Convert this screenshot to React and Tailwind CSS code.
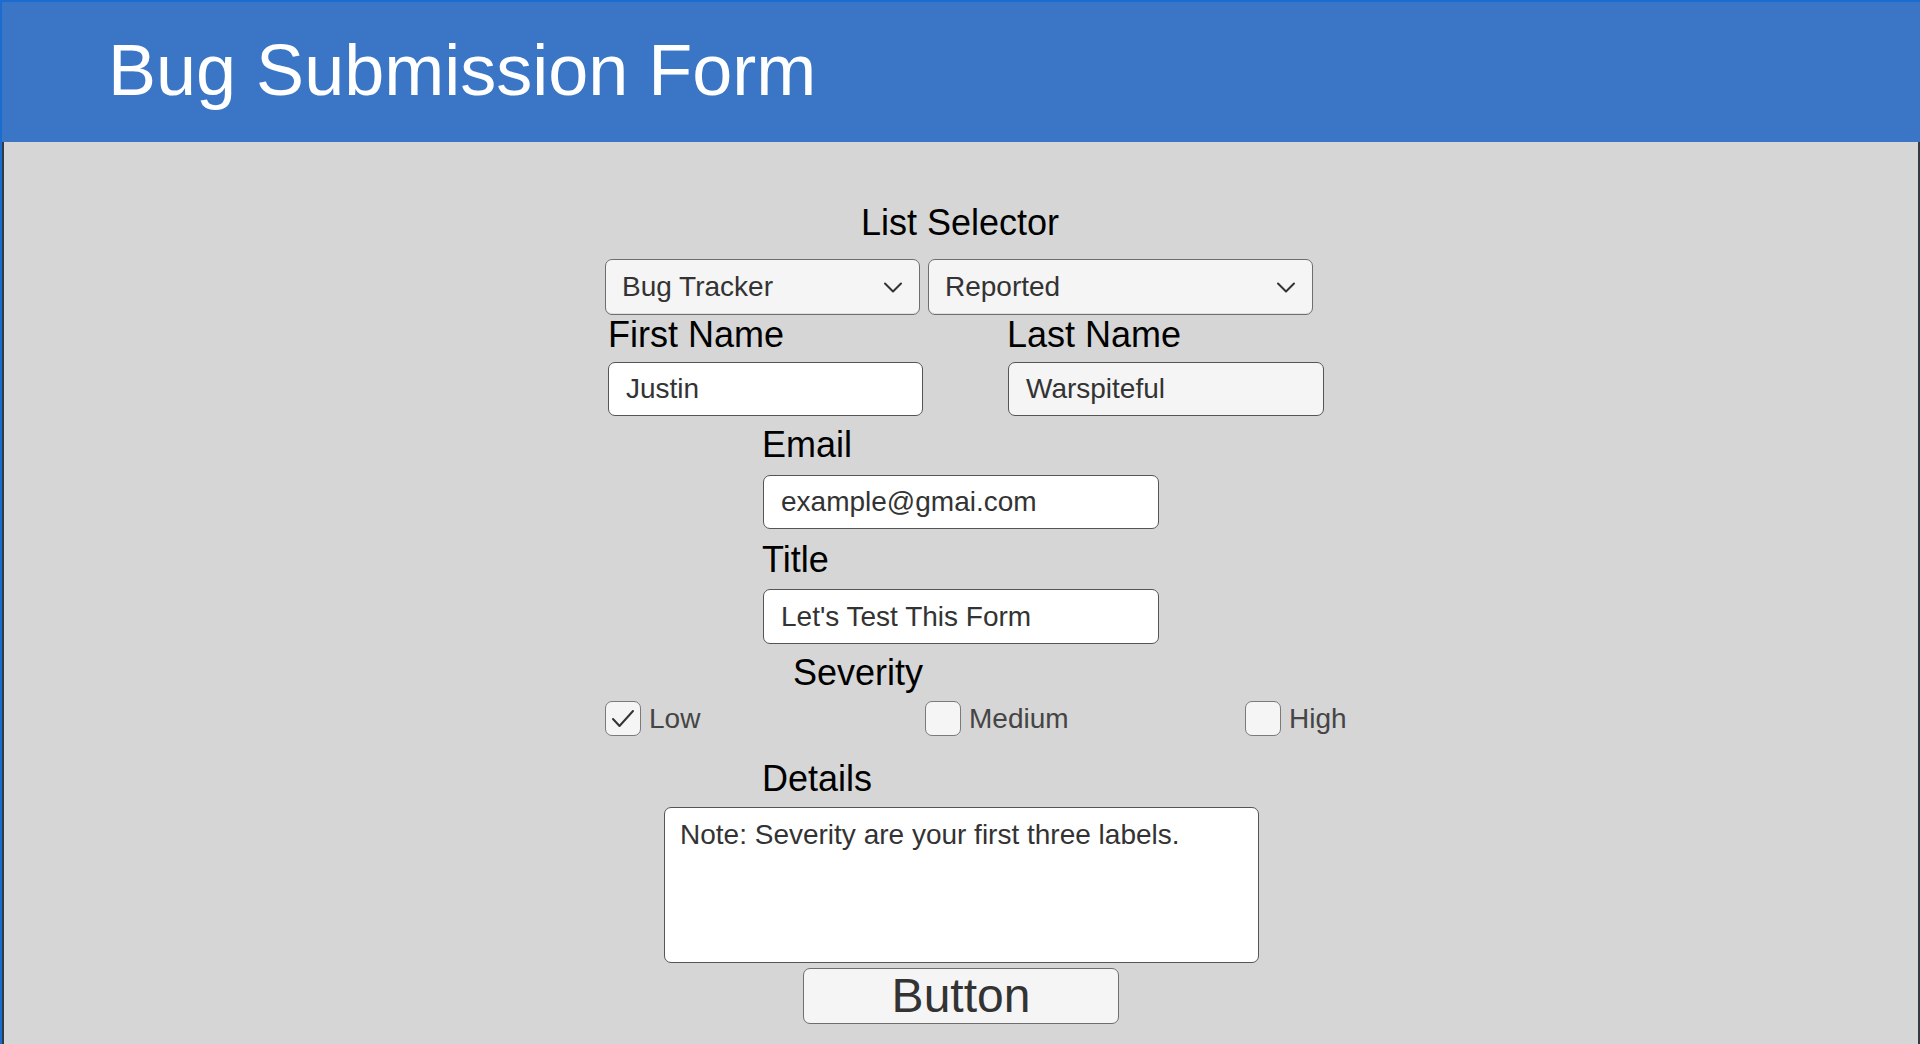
import React from 'react';

const Chevron = () => (
  <svg width="18" height="11" viewBox="0 0 18 11" fill="none" className="shrink-0">
    <path d="M1 1.5L9 9.5L17 1.5" stroke="#333333" strokeWidth="2" strokeLinecap="round" strokeLinejoin="round" />
  </svg>
);

const Dropdown = ({ value, width }) => (
  <div
    className={`${width} h-[56px] shrink-0 flex items-center justify-between pl-[16px] pr-[17px] bg-[#f5f5f5] border border-[#6e6e6e] rounded-[7px] shadow-[inset_0_-1px_0_rgba(0,0,0,0.08)] text-[28px] leading-none text-[#333333]`}
  >
    <span>{value}</span>
    <Chevron />
  </div>
);

const TextBox = ({ value, className = '' }) => (
  <div
    className={`h-[54px] flex items-center pl-[17px] border border-[#555555] rounded-[7px] text-[28px] leading-none text-[#333333] ${className}`}
  >
    {value}
  </div>
);

const Check = ({ label, checked }) => (
  <div className="w-[320px] shrink-0 flex items-center gap-[8px]">
    <div className="w-[36px] h-[35px] shrink-0 bg-[#f5f5f5] border border-[#7a7a7a] rounded-[7px] flex items-center justify-center">
      {checked && (
        <svg width="24" height="20" viewBox="0 0 24 20" fill="none">
          <path d="M2 10L8.5 17L22 2" stroke="#333333" strokeWidth="2" strokeLinecap="round" strokeLinejoin="round" />
        </svg>
      )}
    </div>
    <span className="text-[28px] leading-none text-[#454545]">{label}</span>
  </div>
);

const Label = ({ children, className = '' }) => (
  <div className={`text-[36px] leading-none text-black ${className}`}>{children}</div>
);

export default function App() {
  return (
    <div className="h-screen overflow-hidden bg-[#1a6cd0] pt-[2px] pl-[2px] font-['Liberation_Sans',Arial,sans-serif]">
      {/* Header */}
      <div className="h-[140px] bg-[#3b76c6] pl-[106px] pt-[32px]">
        <h1 className="text-[72px] leading-none text-white">Bug Submission Form</h1>
      </div>

      {/* Body */}
      <div className="h-[902px] bg-[#d6d6d6] border-l-2 border-r-2 border-[#323a44]">
        <div className="w-[720px] ml-[596px] pt-[63px]">
          <Label className="text-center">List Selector</Label>

          <div className="flex gap-[8px] ml-[5px] mt-[18px]">
            <Dropdown value="Bug Tracker" width="w-[315px]" />
            <Dropdown value="Reported" width="w-[385px]" />
          </div>

          <div className="flex mt-[2px]">
            <div className="ml-[8px] w-[315px] shrink-0">
              <Label>First Name</Label>
              <TextBox value="Justin" className="mt-[9px] bg-white" />
            </div>
            <div className="ml-[85px] w-[316px] shrink-0">
              <Label className="-ml-[1px]">Last Name</Label>
              <TextBox value="Warspiteful" className="mt-[9px] bg-[#f5f5f5]" />
            </div>
          </div>

          <div className="ml-[163px] w-[396px] mt-[11px]">
            <Label className="-ml-[1px]">Email</Label>
            <TextBox value="example@gmai.com" className="mt-[12px] bg-white" />
          </div>

          <div className="ml-[163px] w-[396px] mt-[13px]">
            <Label className="-ml-[1px]">Title</Label>
            <TextBox value="Let's Test This Form" className="mt-[11px] bg-white h-[55px]" />
          </div>

          <Label className="ml-[193px] mt-[11px]">Severity</Label>

          <div className="flex ml-[5px] mt-[10px]">
            <Check label="Low" checked />
            <Check label="Medium" />
            <Check label="High" />
          </div>

          <Label className="ml-[162px] mt-[25px]">Details</Label>
          <div className="ml-[64px] mt-[10px] w-[595px] h-[156px] bg-white border border-[#555555] rounded-[7px] pl-[15px] pt-[13px] text-[28px] leading-none text-[#333333]">
            Note: Severity are your first three labels.
          </div>

          <button className="ml-[203px] mt-[5px] w-[316px] h-[56px] bg-[#f5f5f5] border border-[#6e6e6e] rounded-[7px] text-[48px] leading-none text-[#333333] flex items-center justify-center">
            Button
          </button>
        </div>
      </div>
    </div>
  );
}
